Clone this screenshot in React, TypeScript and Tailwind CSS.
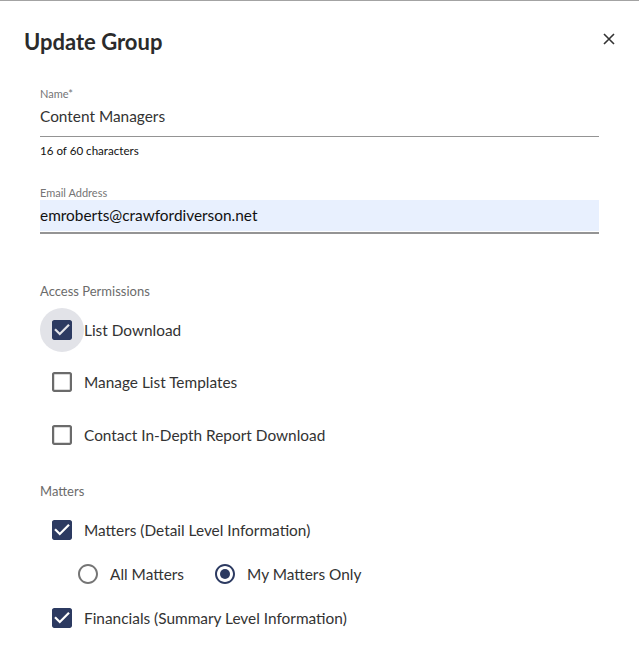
import React from "react";

const NAVY = "#2c3a61";

function CheckIcon({ checked }: { checked: boolean }) {
  if (checked) {
    return (
      <svg width="20" height="20" viewBox="3 3 18 18">
        <path
          fill={NAVY}
          d="M19 3H5c-1.11 0-2 .9-2 2v14c0 1.1.89 2 2 2h14c1.11 0 2-.9 2-2V5c0-1.1-.89-2-2-2zm-9 14l-5-5 1.41-1.41L10 14.17l7.59-7.59L19 8l-9 9z"
        />
      </svg>
    );
  }
  return (
    <svg width="20" height="20" viewBox="3 3 18 18">
      <path
        fill="#6b6b6b"
        d="M19 5v14H5V5h14m0-2H5c-1.1 0-2 .9-2 2v14c0 1.1.9 2 2 2h14c1.1 0 2-.9 2-2V5c0-1.1-.9-2-2-2z"
      />
    </svg>
  );
}

function RadioIcon({ checked }: { checked: boolean }) {
  return (
    <svg width="24" height="24" viewBox="0 0 24 24">
      <path
        fill={checked ? NAVY : "#757575"}
        d="M12 2C6.48 2 2 6.48 2 12s4.48 10 10 10 10-4.48 10-10S17.52 2 12 2zm0 18c-4.42 0-8-3.58-8-8s3.58-8 8-8 8 3.58 8 8-3.58 8-8 8z"
      />
      {checked && <circle cx="12" cy="12" r="5" fill={NAVY} />}
    </svg>
  );
}

function CheckRow({
  label,
  checked,
  focus,
  className,
}: {
  label: string;
  checked: boolean;
  focus?: boolean;
  className?: string;
}) {
  return (
    <div className={"flex items-center h-[44px] " + (className ?? "")}>
      <div
        className={
          "w-[44px] h-[44px] flex items-center justify-center rounded-full " +
          (focus ? "bg-[#e2e3e8]" : "")
        }
      >
        <CheckIcon checked={checked} />
      </div>
      <span className="text-[15.4px] leading-[20px] text-[#333]">{label}</span>
    </div>
  );
}

export default function App() {
  return (
    <div className="w-[639px] h-[652px] bg-white border-t border-[#a3a3a3] font-['Lato',sans-serif] text-[#333] overflow-hidden">
      <div className="flex items-start justify-between pl-[24px] pr-[24px] pt-[27px]">
        <h2 className="text-[22px] leading-[28px] font-bold text-[#2b2b2b]">Update Group</h2>
        <svg width="12" height="12" viewBox="0 0 12 12" className="mt-[5px]">
          <path d="M1 1L11 11M11 1L1 11" stroke="#333" strokeWidth="1.6" />
        </svg>
      </div>

      <div className="px-[40px]">
        <div className="mt-[31px] text-[11px] leading-[14px] text-[#757575]">Name*</div>
        <div className="pt-[5px] pb-[10px] border-b border-[#949494] text-[15.4px] leading-[20px] text-[#333]">
          Content Managers
        </div>
        <div className="mt-[7px] text-[11.6px] leading-[14px] text-[#111]">16 of 60 characters</div>

        <div className="mt-[28px] text-[11px] leading-[14px] text-[#757575]">Email Address</div>
        <div className="bg-[#e8f0fe] pt-[5px] pb-[6px] text-[15.4px] leading-[20px] text-[#111]">
          emroberts@crawfordiverson.net
        </div>
        <div className="mt-[1px] h-[2px] bg-[#949494]" />

        <div className="mt-[49px] text-[13px] leading-[16px] text-[#6b6b6b]">Access Permissions</div>
        <div className="mt-[9px]">
          <CheckRow label="List Download" checked focus />
          <CheckRow label="Manage List Templates" checked={false} className="mt-[8px]" />
          <CheckRow label="Contact In-Depth Report Download" checked={false} className="mt-[9px]" />
        </div>

        <div className="mt-[26px] text-[13px] leading-[16px] text-[#6b6b6b]">Matters</div>
        <div className="mt-[9px]">
          <CheckRow label="Matters (Detail Level Information)" checked />
          <div className="flex items-center h-[44px] ml-[26px]">
            <div className="flex items-center mr-[19px]">
              <div className="w-[44px] h-[44px] flex items-center justify-center">
                <RadioIcon checked={false} />
              </div>
              <span className="text-[15.4px] leading-[20px] text-[#333]">All Matters</span>
            </div>
            <div className="flex items-center">
              <div className="w-[44px] h-[44px] flex items-center justify-center">
                <RadioIcon checked />
              </div>
              <span className="text-[15.4px] leading-[20px] text-[#333]">My Matters Only</span>
            </div>
          </div>
          <CheckRow label="Financials (Summary Level Information)" checked />
        </div>
      </div>
    </div>
  );
}
